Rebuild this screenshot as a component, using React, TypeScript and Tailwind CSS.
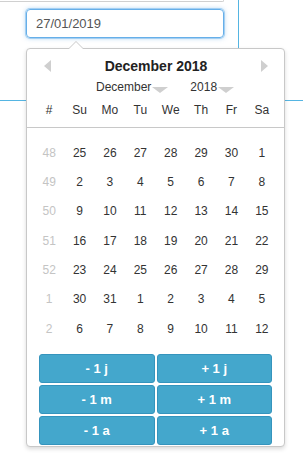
import React from "react";

const weeks: { n: number; days: number[] }[] = [
  { n: 48, days: [25, 26, 27, 28, 29, 30, 1] },
  { n: 49, days: [2, 3, 4, 5, 6, 7, 8] },
  { n: 50, days: [9, 10, 11, 12, 13, 14, 15] },
  { n: 51, days: [16, 17, 18, 19, 20, 21, 22] },
  { n: 52, days: [23, 24, 25, 26, 27, 28, 29] },
  { n: 1, days: [30, 31, 1, 2, 3, 4, 5] },
  { n: 2, days: [6, 7, 8, 9, 10, 11, 12] },
];

const heads = ["#", "Su", "Mo", "Tu", "We", "Th", "Fr", "Sa"];
const buttons = ["- 1 j", "+ 1 j", "- 1 m", "+ 1 m", "- 1 a", "+ 1 a"];

function DownTri() {
  return (
    <span className="mt-[5px] ml-[1px] h-0 w-0 border-l-[8px] border-r-[8px] border-t-[6px] border-l-transparent border-r-transparent border-t-[#cfcfcf]" />
  );
}

export default function App() {
  return (
    <div
      className="relative h-[461px] w-[303px] overflow-hidden bg-white"
      style={{ fontFamily: '"Liberation Sans", Arial, sans-serif' }}
    >
      {/* background page */}
      <div className="flex h-[101px] border-b border-[#55b5e2]">
        <div className="w-[239px] border-r border-[#55b5e2]">
          <div className="h-[2px] w-[224px] rounded-br-[4px] border-b border-r border-[#d0d0d0]" />
          <div className="ml-[26px] mt-[7px] flex h-[29px] w-[198px] items-center rounded-[4px] border border-[#66afe9] pl-[9px] text-[13px] text-[#555] shadow-[0_0_0_1px_rgba(102,175,233,0.45),0_0_5px_rgba(102,175,233,0.6)]">
            27/01/2019
          </div>
        </div>
      </div>

      {/* datepicker popup */}
      <div className="absolute left-[26px] top-[48px] w-[259px] rounded-[4px] border border-[#c8c8c8] bg-white pb-[1px] shadow-[0_2px_4px_rgba(0,0,0,0.15)]">
        {/* caret */}
        <span className="absolute -top-[8px] left-[41px] h-0 w-0 border-b-[8px] border-l-[8px] border-r-[8px] border-b-[#c8c8c8] border-l-transparent border-r-transparent" />
        <span className="absolute -top-[7px] left-[42px] h-0 w-0 border-b-[7px] border-l-[7px] border-r-[7px] border-b-white border-l-transparent border-r-transparent" />

        {/* title row */}
        <div className="mt-[5px] flex h-[24px] items-center justify-between pl-[17px] pr-[16px]">
          <span className="h-0 w-0 border-b-[6px] border-r-[7px] border-t-[6px] border-b-transparent border-r-[#cfcfcf] border-t-transparent" />
          <span className="text-[14px] font-bold text-[#222]">December 2018</span>
          <span className="h-0 w-0 border-b-[6px] border-l-[7px] border-t-[6px] border-b-transparent border-l-[#cfcfcf] border-t-transparent" />
        </div>

        {/* selects */}
        <div className="flex h-[18px] items-center pl-[69px] text-[12px] text-[#333]">
          <span className="flex items-center">
            December
            <DownTri />
          </span>
          <span className="ml-[22px] flex items-center">
            2018
            <DownTri />
          </span>
        </div>

        {/* day header */}
        <div className="border-b border-[#c8c8c8] px-[7px] pb-[3px]">
          <div className="grid h-[28px] grid-cols-8 items-center text-center text-[12px] text-[#333]">
            {heads.map((h) => (
              <span key={h}>{h}</span>
            ))}
          </div>
        </div>

        {/* days */}
        <div className="px-[7px] pt-[10px]">
          {weeks.map((w) => (
            <div
              key={w.n}
              className="grid h-[29.33px] grid-cols-8 items-center text-center text-[12px] text-[#333]"
            >
              <span className="text-[#c4c4c4]">{w.n}</span>
              {w.days.map((d, i) => (
                <span key={i}>{d}</span>
              ))}
            </div>
          ))}
        </div>

        {/* buttons */}
        <div className="mt-[11px] grid grid-cols-2 gap-[2px] px-[12px]">
          {buttons.map((b) => (
            <div
              key={b}
              className="flex h-[29px] items-center justify-center rounded-[3px] border border-[#3594bd] bg-[#44a7cc] text-[13px] font-bold text-white"
            >
              {b}
            </div>
          ))}
        </div>
      </div>
    </div>
  );
}
